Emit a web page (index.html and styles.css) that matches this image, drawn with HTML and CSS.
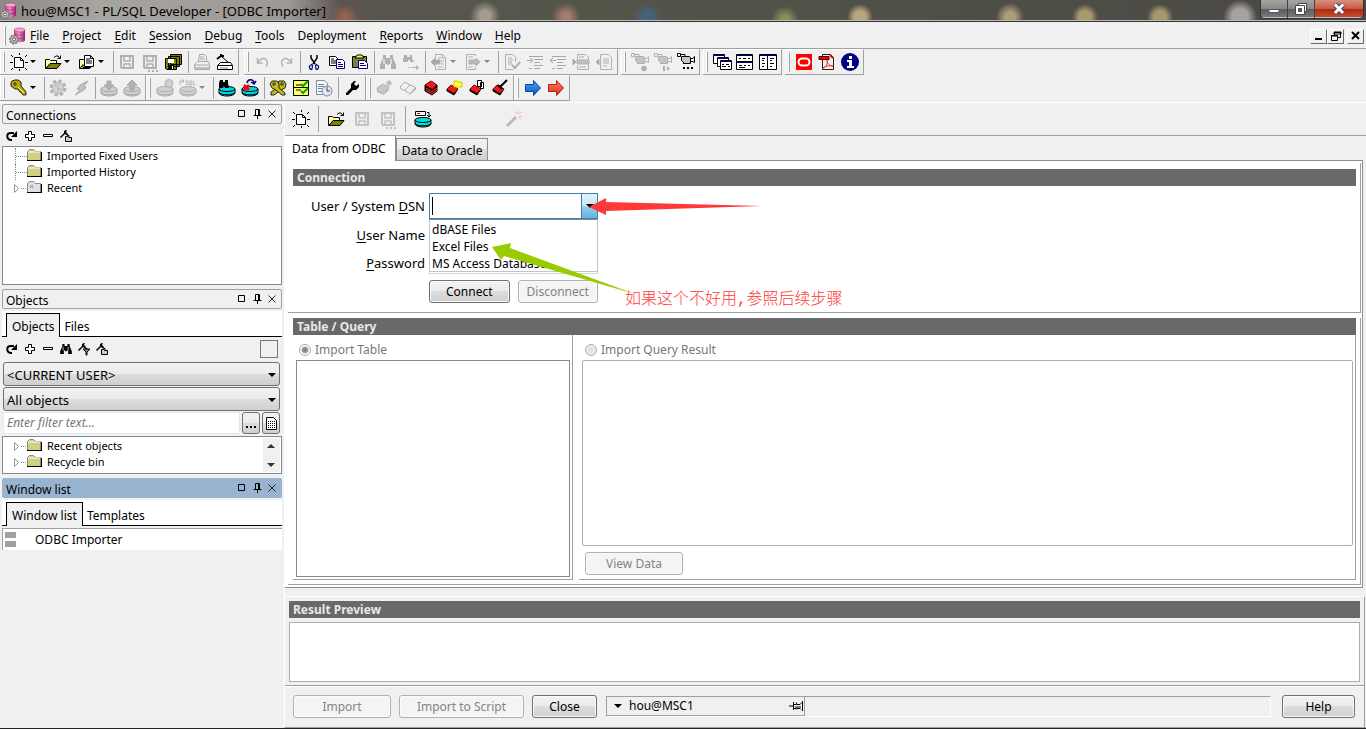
FILE: index.html
```html
<!DOCTYPE html>
<html lang="en">

<head>
    <meta charset="UTF-8">
    <meta name="viewport" content="width=device-width, initial-scale=1.0">
    <title>hou@MSC1 - PL/SQL Developer - [ODBC Importer]</title>
    <link rel="stylesheet" href="styles.css">
</head>

<body>
    <!-- icon shapes, all on a 16x16 grid -->
    <svg class="sprite" aria-hidden="true">
        <defs>
            <linearGradient id="pink"><stop offset="0" stop-color="#c4388c"/><stop offset=".4" stop-color="#f09ccc"/><stop offset="1" stop-color="#9c1c64"/></linearGradient>
            <linearGradient id="blueFill" x2="0" y2="1"><stop offset="0" stop-color="#4aa0f0"/><stop offset="1" stop-color="#0a5cc0"/></linearGradient>
            <linearGradient id="redFill" x2="0" y2="1"><stop offset="0" stop-color="#ff8070"/><stop offset="1" stop-color="#e02818"/></linearGradient>
            <pattern id="dither" width="2" height="2" patternUnits="userSpaceOnUse"><path fill="#ffff60" d="M0 0h2v2H0z"/><path fill="#fff" d="M0 0h1v1H0zM1 1h1v1H1z"/></pattern>

            <g id="app">
                <path d="M4 2v10c0 3 11 3 11 0V2z" fill="url(#pink)"/>
                <ellipse cx="9.500" cy="2" rx="5.500" ry="2" fill="#f4a8d4" stroke="#a83474" stroke-width=".6"/>
                <path d="M4 5.500c1 2 10 2 11 0M4 9c1 2 10 2 11 0" fill="none" stroke="#a02468" stroke-width=".7"/>
                <circle cx="4" cy="11.500" r="4" fill="#ccc" stroke="#777" stroke-dasharray="2 1" stroke-width="2"/>
                <circle cx="4" cy="11.500" r="3.500" fill="#c8c8c8" stroke="#888"/>
                <circle cx="4" cy="11.500" r="1.500" fill="#fff" stroke="#555"/>
            </g>
            <g id="new" fill="none" stroke="#000">
                <path d="M3.500 3.500h6l3 3v7h-9z" fill="#fff"/><path d="M9.500 3.500v3h3"/>
                <path d="M8.500-1v2M8.500 15v2M-1 8.500h3M14 8.500h3M0 1l2 2M16 1l-2 2M0 16l2-2M16 16l-2-2"/>
            </g>
            <g id="open">
                <path d="M.5 14.500v-9h4l1 1h6v3h-6z" fill="url(#dither)" stroke="#000"/>
                <path d="M1 14.500l4-5h11l-4 5z" fill="#808000" stroke="#000"/>
                <path d="M9 3.500l2-1.500h2l2 2.500M15.500 1.500v3h-3" fill="none" stroke="#000"/>
            </g>
            <g id="openPage">
                <path d="M.5 14.500v-9h4l1 1h4v8z" fill="url(#dither)" stroke="#000"/>
                <path d="M5.500 1.500h6l3 3v8h-9z" fill="#fff" stroke="#000"/>
                <path d="M7 5h4M7 7h6M7 9h6M11.500 1.500v3h3" stroke="#000" fill="none"/>
                <path d="M1 14.500l3-4v3h8l-2 1z" fill="#ffff60" stroke="#000"/>
            </g>
            <g id="save" fill="none" stroke="#b0b0b0" stroke-width="2">
                <path d="M2 2h12v12H3l-1-1z"/><path d="M5 2v5h6V2M5 14v-4h6v4" stroke-width="1.500"/>
            </g>
            <g id="saveAs"><use href="#save"/><path fill="#b0b0b0" d="M6 16h2v2H6zM10 16h2v2h-2zM14 16h2v2h-2z"/></g>
            <g id="saveAll" stroke="#000" fill="#808000">
                <path d="M5.500.5h11v10h-11zM3.500 2.500h11v10h-11zM.5 4.500h11v11H2l-1.500-1z"/>
                <path d="M3 5h6v4H3z" fill="#fff" stroke="none"/><path d="M3 11h6v4H3z" fill="#000" stroke="none"/><path d="M7 12h1v3H7z" fill="#fff" stroke="none"/>
            </g>
            <g id="print" fill="none" stroke="#a8a8a8">
                <path d="M4.500 7.500l1-7h5l2 2v5M6 3h4M6 5h5"/><path d="M.5 10.500l3-3h11l1 3v5H1l-.5-1zM1 11h14M3 13.500h9" /><path d="M1 13h14v2H1z" fill="#c0c0c0" stroke="none"/>
            </g>
            <g id="printSetup" fill="none" stroke="#000">
                <path d="M.5 11.500l3-3h10l2 3v4h-15zM1 11.500h14" fill="#fff"/><path d="M3 14h8" stroke="#888"/>
                <path d="M0 5l4-3M4 2V0M4 2h3" stroke-width="2"/><path d="M5 3l6 5"/>
            </g>
            <path id="undo" d="M2.500 4v5h5M3 8.500c2-4 6-5 8-3s2 4 0 7" fill="none" stroke="#b4b4b4" stroke-width="1.500"/>
            <path id="redo" d="M13.500 4v5h-5M13 8.500c-2-4-6-5-8-3s-2 4 0 7" fill="none" stroke="#b4b4b4" stroke-width="1.500"/>
            <g id="cut" fill="none"><path d="M5 1v3l4 6M11 1v3L7 10" stroke="#000" stroke-width="1.500"/><path d="M6.500 10L5 11c-3 1-1 6 1 4l.5-4M9.500 10l1.500 1c3 1 1 6-1 4l-.5-4" stroke="#000080" stroke-width="1.200"/></g>
            <g id="copy" fill="#fff"><path d="M.5 2.500h6l2 2v7h-8z" stroke="#000"/><path d="M2 5h3M2 7h5M2 9h5" stroke="#000"/><path d="M7.500 5.500h6l2 2v7h-8z" stroke="#000080"/><path d="M9 8.500h3M9 10.500h5M9 12.500h5" stroke="#000080"/></g>
            <g id="paste"><path d="M.5 2.500h14v11H.5z" fill="#808040" stroke="#000"/><path d="M3 4l2-3h5l2 3z" fill="#ffff40" stroke="#000"/><path d="M6.500 6.500h6l3 3v5h-9z" fill="#fff" stroke="#000080"/><path d="M8 9.500h4M8 11.500h6" stroke="#000080"/></g>
            <path id="binoc" d="M3 1h3v3h4V1h3v3l3 7v4h-5v-5H9v1H7v-1H5v5H0v-4l3-7z"/>
            <path id="binocDots" d="M4 5v5M11 5v5" stroke="#fff"/>
            <g id="findNext" fill="#b0b0b0"><path d="M1 1h3v2h3V1h2v3l2 4H7V6H5v2H0V5l1-2z"/><path d="M5 13h1v1H5zM7 13h1v1H7zM9 13h4v-2l3 2.500-3 2.500v-2H9z"/></g>
            <g id="back" fill="none" stroke="#b0b0b0"><path d="M4.500 4V.5h7l3 3v12h-10V12M11 1v3h3M7 4h3M10 7h3M10 10h3M7 13h5"/><path d="M0 8l4-4v2h5v4H4v2z" fill="#a8a8a8"/></g>
            <g id="forward" fill="none" stroke="#b0b0b0"><path d="M10.500 2V.5h-9v15h9V13M3 3h5M3 13h5"/><path d="M15 8l-4-4v2H4v4h7v2z" fill="#b8b8b8"/></g>
            <g id="docCheck" fill="none" stroke="#b0b0b0"><path d="M11.500 8V3l-3-2.500h-7v15h8M4 4h4M4 6h5M4 8h4M4 10h4"/><path d="M8 11l3 3 5-6" stroke-width="2"/></g>
            <path id="indent" d="M2 2.500h14M7 5.500h9M7 8.500h6M7 11.500h9M2 14.500h3M7 14.500h6M0 6.500h5M3 4l3 2.500L3 9" fill="none" stroke="#a8a8a8"/>
            <path id="outdent" d="M2 2.500h14M7 5.500h9M7 8.500h6M7 11.500h9M2 14.500h3M7 14.500h6M1 6.500h5M3 4L0 6.500 3 9" fill="none" stroke="#a8a8a8"/>
            <g id="comment" fill="none" stroke="#b0b0b0"><path d="M4.500 6V.5h8l3 3v12h-11v-4M6 3h5M6 13h7"/><path d="M4 6h12v4H4z" fill="#c0c0c0"/><path d="M0 5l3 3-3 3z" fill="#a0a0a0"/></g>
            <g id="uncomment" fill="none" stroke="#b0b0b0"><path d="M4.500.5h8l3 3v12h-11zM7 5h6M7 7h6M7 9h6M7 12h4"/><path d="M3 5L0 8l3 3z" fill="#a0a0a0"/></g>
            <g id="camera" stroke="currentColor" fill="none"><path d="M3.500 2.500h8l1 1v6h-6l-3-3z" fill="#c4c4c4"/><path d="M-.5-.5h3v3h-3zM3 .5h4v2M13 4.500h2l1.500-2v6l-1.500-1h-2M5 9.500h6"/></g>
            <g id="record" color="#b0b0b0"><use href="#camera"/><circle cx="12" cy="14.500" r="2.800" fill="#b0b0b0"/></g>
            <g id="playback" color="#b0b0b0"><use href="#camera"/><path d="M8 12h2v5H8zM12 12l3 2.500-3 2.500z" fill="#b0b0b0"/></g>
            <g id="macro" color="#000"><use href="#camera"/><path d="M5 13h2v2H5zM9 13h2v2H9zM13 13h2v2h-2z"/></g>
            <g id="cascade" fill="#fff" stroke="#000"><path d="M-.5.500h11v9h-11z"/><path d="M3.500 3.500h11v9h-11z"/><path d="M6.500 6.500h11v9h-11z"/><path d="M-1 1.500h12M3 4.500h12M6 7.500h12" stroke="#000080"/><path d="M8 10.500h2M12 10.500h3M8 12.500h4M14 12.500h2"/></g>
            <g id="tileH" fill="#fff" stroke="#000"><path d="M-.5.500h16v7h-16zM-.5 7.500h16v8h-16z"/><path d="M0 1.500h15M0 8.500h15" stroke="#000080"/><path d="M2 4.500h2M6 4.500h3M11 4.500h2M2 11.500h3M7 11.500h2M11 11.500h2M2 13.500h6"/></g>
            <g id="tileV" fill="#fff" stroke="#000"><path d="M-.5.500h8v15h-8zM7.500.5h9v15h-9z"/><path d="M0 1.500h16" stroke="#000080"/><path d="M2 4.500h3M2 6.500h2M2 9.500h3M2 12.500h2M10 4.500h4M10 6.500h2M10 9.500h4M10 12.500h2"/></g>
            <g id="oracle"><path d="M0 0h16v16H0z" fill="#f00"/><rect x="2.500" y="4.500" width="11" height="7" rx="3.500" fill="none" stroke="#fff" stroke-width="2"/></g>
            <g id="pdf"><path d="M3.500.5h8l3 3v12h-11z" fill="#eee" stroke="#222"/><path d="M0 2.500h10v3H0z" fill="#f00" stroke="#500"/><path d="M11 1l3 3" stroke="#e00" stroke-width="2"/><path d="M4 14c3-1 5-4 4-8 0 4 3 6 6 6-4-1-7 0-10 2" fill="none" stroke="#e33"/></g>
            <g id="info"><circle cx="8" cy="8" r="9" fill="#000080"/><path d="M7 2h3v3H7zM5 6h5v6h2v2H5v-2h2V8H5z" fill="#fff"/></g>

            <g id="key"><path d="M1 1l3-1h3l3 2v4l5 6v3h-3l-2-3H9L7 9H4L0 6V3z" fill="#b8b000" stroke="#222"/><path d="M3 3h2v2H3z" fill="#fff" stroke="#222"/><path d="M7 7l6 6" stroke="#ff6"/></g>
            <g id="gear" fill="none" stroke="#b4b4b4"><circle cx="8" cy="8" r="7" stroke-width="3" stroke-dasharray="3.500 2"/><circle cx="8" cy="8" r="5.500" fill="#d4d4d4"/><path d="M8 4v8M5 6h3M8 9h4"/></g>
            <path id="bolt" d="M15 1L7 5 4 9l3 1-5 5 9-5 2-3-2-1z" fill="#c0c0c0" stroke="#aaa"/>
            <g id="disk"><path d="M0 9v4c1 4 15 4 16 0V9z"/><ellipse cx="8" cy="9" rx="8" ry="2.500"/><path d="M0 12.500c2 3 14 3 16 0" fill="none"/></g>
            <g id="commit" fill="#d0d0d0" stroke="#a8a8a8"><use href="#disk"/><path d="M6 1h4v4h3l-5 5-5-5h3z" fill="#b0b0b0"/></g>
            <g id="rollback" fill="#d0d0d0" stroke="#a8a8a8"><use href="#disk"/><path d="M6 10h4V5h3L8 0 3 5h3z" fill="#b0b0b0"/></g>
            <g id="diskBall" fill="#d0d0d0" stroke="#b0b0b0"><use href="#disk"/><circle cx="12" cy="3.500" r="4"/></g>
            <g id="diskSql" fill="#d0d0d0" stroke="#b0b0b0"><use href="#disk"/><path d="M0 5V1h4M2-1l2 2-2 2" fill="none"/><text x="5" y="5" class="sql-mark">SQL</text></g>
            <g id="dbFind" fill="#00d8e0" stroke="#000"><use href="#disk"/><path d="M1 0h3v2h2V0h3v3l1 5H6V6H4v2H0V3z" fill="#000" stroke="none"/></g>
            <g id="dbStop" fill="#00d8e0" stroke="#000"><use href="#disk"/><path d="M2 5l5 5M7 5l-5 5" stroke="#f00" stroke-width="2.500"/><path d="M5 3c1-5 7-4 7 1M9 2l3 2 2-3" fill="none" stroke="#000080" stroke-width="1.500"/></g>
            <g id="keys" stroke="#222" fill="#c4bc10"><path d="M9 1h5l2 3-1 4-4 2-7 5H1v-3l6-4z"/><path d="M2 1h5l2 3 0 4 6 5v2h-3L6 10 2 8 0 4z"/><path d="M3 3h2v2H3zM11 3h2v2h-2z" fill="#fff"/></g>
            <g id="check"><path d="M.5.500h15v15H.5z" fill="#ffff60" stroke="#000"/><path d="M3 5h5M3 10h5M1 7.500h14" stroke="#000"/><path d="M8 4l2 2 5-5M8 11l2 2 5-5" fill="none" stroke="#0a0" stroke-width="2"/></g>
            <g id="report" fill="#f8f8f8" stroke="#889"><path d="M.5.500h8l3 3v11H.5z"/><path d="M2 4.500h6M2 6.500h7M2 8.500h4M2 11.500h4" stroke="#68a"/><circle cx="11" cy="11" r="5" fill="#dfe8f4"/><path d="M11 7v4h3" stroke="#345" fill="none"/></g>
            <path id="wrench" d="M2 13l5-5V4l3-3h2l-2 3 2 2 3-2v3l-3 3H9l-5 5H2z"/>
            <g id="bookNew" fill="#c8c8c8" stroke="#b0b0b0"><path d="M0 8l6-4 6 3-5 7-6-2z"/><path d="M0 11l7 3 5-5M12 0v6M9 3h6M10 1l4 4M14 1l-4 4" fill="none"/></g>
            <path id="bookOpen" d="M0 7l5-5 5 3 5 2 1 2-6 5-4-3-5-2zM5 10l5-5M10 14l5-6" fill="none" stroke="#aaa"/>
            <g id="book"><path d="M2 5l6-4 6 4v6l-5 4-7-4z" fill="#200" stroke="#000"/><path d="M2 5l6-4 6 4-5 4z" fill="#f01818"/><path d="M3 8l6 4 5-4M3 10l6 4 5-4" fill="none" stroke="#f33"/></g>
            <g id="bookRed"><path d="M1 9l4-4 7 4-4 6-7-4z" fill="#300" stroke="#000"/><path d="M1 9l4-4 7 4-4 4z" fill="#f01818"/></g>
            <g id="bookFolder"><use href="#bookRed"/><path d="M8 1h3l1 1h4v5H8z" fill="#ff3" stroke="#cc0"/></g>
            <g id="bookCopy"><use href="#bookRed"/><path d="M8.500.5h4v6h-4zM11.500 2.500h3v6h-3z" fill="#fff" stroke="#000"/></g>
            <g id="bookPen"><use href="#bookRed"/><path d="M15 0L8 7M6 5l4 4" stroke="#000" stroke-width="2"/></g>
            <path id="arrowBlue" d="M.5 4.500h8V.5l7 7.500-7 7.500v-4h-8z" fill="url(#blueFill)" stroke="#0848a0"/>
            <path id="arrowRed" d="M.5 4.500h8V.5l7 7.500-7 7.500v-4h-8z" fill="url(#redFill)" stroke="#b02010"/>

            <path id="down" d="M0 6h6L3 9z"/>
            <path id="downBig" d="M0 6h8l-4 4z"/>
            <g id="dbImport" fill="#00e0e0" stroke="#000"><use href="#disk"/><path d="M.5.500h10v4H.5z" fill="#fff"/><path d="M2 2.500h3" stroke="#c00"/><path d="M12 1.500h2v4M12 4l2 2 2-2" fill="none"/></g>
            <g id="wand" fill="none"><path d="M1 15L10 6" stroke="#b8b8b8" stroke-width="3"/><path d="M12 0v3M9 1l2 2M15 1l-2 2M16 5h-3M15 8l-2-2" stroke="#f0b4b4"/></g>

            <path id="boxy" d="M4.500 4.500h6v6h-6z" fill="none" stroke="#000"/>
            <path id="pin" d="M6.500 3.500h4v6h-4zM9.500 4v5M4.500 9.500h8M8.500 10v3" fill="none" stroke="#000"/>
            <path id="cross" d="M4.500 4.500l7 7M11.500 4.500l-7 7" fill="none" stroke="#222"/>
            <g id="refresh"><path d="M8 12H7C2 11 2 5 7 5h3" fill="none" stroke="#000" stroke-width="2"/><path d="M13 3v6H7z"/></g>
            <path id="plus" d="M6.500 3.500h3v3h3v3h-3v3h-3v-3h-3v-3h3z" fill="#fff" stroke="#000"/>
            <path id="minus" d="M3.500 6.500h9v2h-9z" fill="#fff" stroke="#000"/>
            <g id="toolFolder"><path d="M2 9l4-4V3l2-1h1L8 4l2 2H7l-4 4zM8 5l4 3-1 1-4-3z"/><path d="M7.500 8.500h2l1 1h3v4h-6z" fill="#ccc" stroke="#000"/></g>
            <g id="toolFilter"><path d="M2 9l4-4V3l2-1h1L8 4l2 2H7l-4 4zM8 5l4 3-1 1-4-3z"/><path d="M7 8h7l-3 3v3h-1v-3z" fill="#888" stroke="#000"/></g>

            <g id="folder"><path d="M.5 12.500v-9l2-2h4l2 2h5v9z" fill="#d0d080" stroke="#888"/><path d="M1 4h12" stroke="#fff"/><path d="M0 12.500h15M14.500 4v9" stroke="#000"/></g>
            <g id="folderGray"><path d="M.5 12.500v-9l2-2h4l2 2h5v9z" fill="#e0e0e0" stroke="#888"/><path d="M3 5l3 3M6 5L3 8" stroke="#888"/><path d="M0 12.500h15M14.500 4v9" stroke="#000"/></g>
            <path id="twist" d="M.5 4.500l4 4-4 4z" fill="#fff" stroke="#999"/>
        </defs>
    </svg>

    <header class="titlebar">
        <svg class="icon"><use href="#app"/></svg>
        <span class="caption">hou@MSC1 - PL/SQL Developer - [ODBC Importer]</span>
        <div class="window-buttons">
            <button aria-label="Minimize"><svg class="icon"><path d="M3 8.500h10v3H3z" fill="#fff" stroke="#556"/></svg></button>
            <button aria-label="Restore"><svg class="icon"><path d="M5.500 2.500h8v8h-8z" fill="#fff" stroke="#445"/><path d="M2.500 4.500h9v9h-9z" fill="#fff" stroke="#445"/><path d="M5.500 7.500h3v3h-3z" fill="#666" stroke="#445"/></svg></button>
            <button class="close" aria-label="Close window"><svg class="icon"><path d="M4 3.500l8 8.500M12 3.500L4 12" stroke="#446" stroke-width="5"/><path d="M4 3.500l8 8.500M12 3.500L4 12" stroke="#fff" stroke-width="3"/></svg></button>
        </div>
    </header>

    <nav class="menubar">
        <i class="grip"></i>
        <svg class="icon"><use href="#app"/></svg>
        <a href="#"><u>F</u>ile</a>
        <a href="#"><u>P</u>roject</a>
        <a href="#"><u>E</u>dit</a>
        <a href="#"><u>S</u>ession</a>
        <a href="#"><u>D</u>ebug</a>
        <a href="#"><u>T</u>ools</a>
        <a href="#">Deployment</a>
        <a href="#"><u>R</u>eports</a>
        <a href="#"><u>W</u>indow</a>
        <a href="#"><u>H</u>elp</a>
        <div class="mdi-buttons">
            <button aria-label="Minimize child"><svg class="icon"><path d="M4 10h7v2H4z"/></svg></button>
            <button aria-label="Restore child"><svg class="icon"><path d="M6.500 4.500h6v5h-6zM6 4h7v2H6z" fill="#f0f0f0" stroke="#000"/><path d="M3.500 7.500h6v5h-6zM3 8h7" fill="#f0f0f0" stroke="#000"/></svg></button>
            <button aria-label="Close child"><svg class="icon"><path d="M4 4l7 7M11 4l-7 7" stroke="#000" stroke-width="2"/></svg></button>
        </div>
    </nav>

    <div class="toolbar-row">
        <div class="toolbar file-bar">
            <i class="grip"></i>
            <button class="menu" aria-label="New"><svg class="icon"><use href="#new"/></svg><svg class="arrow"><use href="#down"/></svg></button>
            <button class="menu" aria-label="Open"><svg class="icon"><use href="#open"/></svg><svg class="arrow"><use href="#down"/></svg></button>
            <button class="menu" aria-label="Reopen"><svg class="icon"><use href="#openPage"/></svg><svg class="arrow"><use href="#down"/></svg></button>
            <i class="sep"></i>
            <button disabled aria-label="Save"><svg class="icon"><use href="#save"/></svg></button>
            <button disabled aria-label="Save as"><svg class="icon"><use href="#saveAs"/></svg></button>
            <button aria-label="Save all"><svg class="icon"><use href="#saveAll"/></svg></button>
            <i class="sep"></i>
            <button disabled aria-label="Print"><svg class="icon"><use href="#print"/></svg></button>
            <button aria-label="Print setup"><svg class="icon"><use href="#printSetup"/></svg></button>
        </div>
        <div class="toolbar">
            <i class="grip"></i>
            <button disabled aria-label="Undo"><svg class="icon"><use href="#undo"/></svg></button>
            <button disabled aria-label="Redo"><svg class="icon"><use href="#redo"/></svg></button>
            <i class="sep"></i>
            <button aria-label="Cut"><svg class="icon"><use href="#cut"/></svg></button>
            <button aria-label="Copy"><svg class="icon"><use href="#copy"/></svg></button>
            <button aria-label="Paste"><svg class="icon"><use href="#paste"/></svg></button>
            <i class="sep"></i>
            <button disabled aria-label="Find"><svg class="icon"><use href="#binoc" fill="#b0b0b0"/><use href="#binocDots"/></svg></button>
            <button disabled aria-label="Find next"><svg class="icon"><use href="#findNext"/></svg></button>
            <i class="sep"></i>
            <button class="menu" disabled aria-label="Back"><svg class="icon"><use href="#back"/></svg><svg class="arrow"><use href="#down"/></svg></button>
            <button class="menu" disabled aria-label="Forward"><svg class="icon"><use href="#forward"/></svg><svg class="arrow"><use href="#down"/></svg></button>
            <i class="sep"></i>
            <button disabled aria-label="Beautify"><svg class="icon"><use href="#docCheck"/></svg></button>
            <button disabled aria-label="Indent"><svg class="icon"><use href="#indent"/></svg></button>
            <button disabled aria-label="Unindent"><svg class="icon"><use href="#outdent"/></svg></button>
            <button disabled aria-label="Comment"><svg class="icon"><use href="#comment"/></svg></button>
            <button disabled aria-label="Uncomment"><svg class="icon"><use href="#uncomment"/></svg></button>
        </div>
        <div class="toolbar">
            <i class="grip"></i>
            <button disabled aria-label="Record macro"><svg class="icon"><use href="#record"/></svg></button>
            <button disabled aria-label="Play macro"><svg class="icon"><use href="#playback"/></svg></button>
            <button aria-label="Macro library"><svg class="icon"><use href="#macro"/></svg></button>
        </div>
        <div class="toolbar">
            <i class="grip"></i>
            <button aria-label="Cascade"><svg class="icon"><use href="#cascade"/></svg></button>
            <button aria-label="Tile horizontally"><svg class="icon"><use href="#tileH"/></svg></button>
            <button aria-label="Tile vertically"><svg class="icon"><use href="#tileV"/></svg></button>
        </div>
        <div class="toolbar">
            <i class="grip"></i>
            <button aria-label="Oracle"><svg class="icon"><use href="#oracle"/></svg></button>
            <button aria-label="Manual"><svg class="icon"><use href="#pdf"/></svg></button>
            <button aria-label="About"><svg class="icon"><use href="#info"/></svg></button>
        </div>
    </div>

    <div class="toolbar-row tight">
        <div class="toolbar">
            <i class="grip"></i>
            <button class="menu" aria-label="Log on"><svg class="icon"><use href="#key"/></svg><svg class="arrow"><use href="#down"/></svg></button>
            <i class="sep"></i>
            <button disabled aria-label="Execute"><svg class="icon"><use href="#gear"/></svg></button>
            <button disabled aria-label="Break"><svg class="icon"><use href="#bolt"/></svg></button>
            <i class="sep"></i>
            <button disabled aria-label="Commit"><svg class="icon"><use href="#commit"/></svg></button>
            <button disabled aria-label="Rollback"><svg class="icon"><use href="#rollback"/></svg></button>
        </div>
        <div class="toolbar">
            <i class="grip"></i>
            <button disabled aria-label="Explain plan"><svg class="icon"><use href="#diskBall"/></svg></button>
            <button class="menu" disabled aria-label="Previous SQL"><svg class="icon"><use href="#diskSql"/></svg><svg class="arrow"><use href="#down"/></svg></button>
            <i class="sep"></i>
            <button aria-label="Find database objects"><svg class="icon"><use href="#dbFind"/></svg></button>
            <button aria-label="Recompile invalid objects"><svg class="icon"><use href="#dbStop"/></svg></button>
            <i class="sep"></i>
            <button aria-label="Sessions"><svg class="icon"><use href="#keys"/></svg></button>
            <button aria-label="Test manager"><svg class="icon"><use href="#check"/></svg></button>
            <button aria-label="Event monitor"><svg class="icon"><use href="#report"/></svg></button>
            <i class="sep"></i>
            <button aria-label="Preferences"><svg class="icon"><use href="#wrench"/></svg></button>
        </div>
        <div class="toolbar">
            <i class="grip"></i>
            <button disabled aria-label="New project"><svg class="icon"><use href="#bookNew"/></svg></button>
            <button disabled aria-label="Open project"><svg class="icon"><use href="#bookOpen"/></svg></button>
            <button aria-label="Project items"><svg class="icon"><use href="#book"/></svg></button>
            <button aria-label="Project files"><svg class="icon"><use href="#bookFolder"/></svg></button>
            <button aria-label="Copy project"><svg class="icon"><use href="#bookCopy"/></svg></button>
            <button aria-label="Project options"><svg class="icon"><use href="#bookPen"/></svg></button>
        </div>
        <div class="toolbar">
            <i class="grip"></i>
            <button aria-label="Next"><svg class="icon"><use href="#arrowBlue"/></svg></button>
            <button aria-label="Jump"><svg class="icon"><use href="#arrowRed"/></svg></button>
        </div>
    </div>

    <main class="workspace">
        <aside class="sidebar">
            <section class="dock">
                <h2 class="dock-title"><span>Connections</span><svg class="icon"><use href="#boxy"/></svg><svg class="icon"><use href="#pin"/></svg><svg class="icon"><use href="#cross"/></svg></h2>
                <div class="dock-tools">
                    <button aria-label="Refresh"><svg class="icon"><use href="#refresh"/></svg></button>
                    <button aria-label="Expand"><svg class="icon"><use href="#plus"/></svg></button>
                    <button aria-label="Collapse"><svg class="icon"><use href="#minus"/></svg></button>
                    <button aria-label="Configure"><svg class="icon"><use href="#toolFolder"/></svg></button>
                </div>
                <ul class="tree connections">
                    <li><i class="branch"></i><svg class="icon"><use href="#folder"/></svg>Imported Fixed Users</li>
                    <li><i class="branch"></i><svg class="icon"><use href="#folder"/></svg>Imported History</li>
                    <li><svg class="twist"><use href="#twist"/></svg><i class="stub"></i><svg class="icon"><use href="#folderGray"/></svg>Recent</li>
                </ul>
            </section>

            <section class="dock">
                <h2 class="dock-title"><span>Objects</span><svg class="icon"><use href="#boxy"/></svg><svg class="icon"><use href="#pin"/></svg><svg class="icon"><use href="#cross"/></svg></h2>
                <div class="dock-tabs">
                    <button class="active">Objects</button>
                    <button>Files</button>
                </div>
                <div class="dock-tools">
                    <button aria-label="Refresh objects"><svg class="icon"><use href="#refresh"/></svg></button>
                    <button aria-label="Expand objects"><svg class="icon"><use href="#plus"/></svg></button>
                    <button aria-label="Collapse objects"><svg class="icon"><use href="#minus"/></svg></button>
                    <button aria-label="Find objects"><svg class="icon" viewBox="-3 -3 22 22"><use href="#binoc"/><use href="#binocDots"/></svg></button>
                    <button aria-label="Filter"><svg class="icon"><use href="#toolFilter"/></svg></button>
                    <button aria-label="Configure folders"><svg class="icon"><use href="#toolFolder"/></svg></button>
                    <i class="swatch"></i>
                </div>
                <div class="filters">
                    <div class="picker"><select aria-label="User"><option>&lt;CURRENT USER&gt;</option></select></div>
                    <div class="picker"><select aria-label="Object filter"><option>All objects</option></select></div>
                    <div class="filter-line">
                        <input type="text" placeholder="Enter filter text..." aria-label="Filter text">
                        <button aria-label="More"><svg class="icon"><path d="M3 11h2v2H3zM7 11h2v2H7zM11 11h2v2h-2z"/></svg></button>
                        <button aria-label="Object list"><svg class="icon"><path d="M3.500 2.500h7l3 3v9h-10z" fill="#fff" stroke="#000"/><path d="M5 6.500h7M5 8.500h7M5 10.500h7M5 12.500h7" stroke="#000" stroke-dasharray="1 1"/></svg></button>
                    </div>
                </div>
                <div class="tree objects">
                    <ul>
                        <li><svg class="twist"><use href="#twist"/></svg><i class="stub"></i><svg class="icon"><use href="#folder"/></svg>Recent objects</li>
                        <li><svg class="twist"><use href="#twist"/></svg><i class="stub"></i><svg class="icon"><use href="#folder"/></svg>Recycle bin</li>
                    </ul>
                    <div class="scroller">
                        <svg class="icon"><path d="M4 10l4-4 4 4z" fill="#333"/></svg>
                        <svg class="icon"><path d="M4 7l4 4 4-4z" fill="#333"/></svg>
                    </div>
                </div>
            </section>

            <section class="dock">
                <h2 class="dock-title current"><span>Window list</span><svg class="icon"><use href="#boxy"/></svg><svg class="icon"><use href="#pin"/></svg><svg class="icon"><use href="#cross"/></svg></h2>
                <div class="dock-tabs">
                    <button class="active">Window list</button>
                    <button>Templates</button>
                </div>
                <div class="window-item"><svg class="icon"><path d="M2 0h11v6H2zM2 9h11v6H2z" fill="#a0a0a0"/></svg>ODBC Importer</div>
            </section>
        </aside>

        <section class="importer">
            <div class="importer-tools">
                <button aria-label="New import"><svg class="icon"><use href="#new"/></svg></button>
                <i class="sep"></i>
                <button aria-label="Open definition"><svg class="icon"><use href="#open"/></svg></button>
                <button disabled aria-label="Save definition"><svg class="icon faded"><use href="#save"/></svg></button>
                <button disabled aria-label="Save definition as"><svg class="icon faded"><use href="#saveAs"/></svg></button>
                <i class="sep"></i>
                <button aria-label="Import"><svg class="icon"><use href="#dbImport"/></svg></button>
                <button class="wizard" disabled aria-label="Wizard"><svg class="icon"><use href="#wand"/></svg></button>
            </div>

            <div class="page-tabs">
                <button class="active">Data from ODBC</button>
                <button>Data to Oracle</button>
            </div>

            <div class="page">
                <div class="connection">
                    <h3 class="band">Connection</h3>
                    <form class="login">
                        <label for="dsn">User / System <u>D</u>SN</label>
                        <div class="combo">
                            <input type="text" id="dsn">
                            <button type="button" aria-label="Show list"><svg class="arrow"><use href="#downBig"/></svg></button>
                            <ul class="options">
                                <li>dBASE Files</li>
                                <li>Excel Files</li>
                                <li>MS Access Database</li>
                            </ul>
                        </div>
                        <label for="user"><u>U</u>ser Name</label>
                        <input type="text" id="user">
                        <label for="password"><u>P</u>assword</label>
                        <input type="password" id="password">
                        <div class="login-buttons">
                            <button type="button" class="btn">Connect</button>
                            <button type="button" class="btn" disabled>Disconnect</button>
                        </div>
                    </form>
                    <svg class="pointers" aria-hidden="true">
                        <path d="M301 38l17-9v4l156 4-156 5v4z" fill="#ff3838"/>
                        <path d="M204 78l19-4-1 5 125 46-131-38-3 4z" fill="#99cc00"/>
                    </svg>
                    <p class="note" lang="zh">如果这个不好用,参照后续步骤</p>
                </div>

                <div class="query">
                    <h3 class="band">Table / Query</h3>
                    <div class="panes">
                        <div class="pane table-pane">
                            <label><input type="radio" name="source" checked disabled>Import Table</label>
                            <div class="listbox"></div>
                        </div>
                        <div class="pane query-pane">
                            <label><input type="radio" name="source" disabled>Import Query Result</label>
                            <textarea aria-label="Query" disabled></textarea>
                            <button class="btn" disabled>View Data</button>
                        </div>
                    </div>
                </div>
            </div>

            <div class="preview">
                <h3 class="band">Result Preview</h3>
                <div class="result"></div>
            </div>

            <footer class="actions">
                <button class="btn" disabled>Import</button>
                <button class="btn wide" disabled>Import to Script</button>
                <button class="btn small">Close</button>
                <div class="status">
                    <button class="session"><svg class="arrow"><use href="#downBig"/></svg><span>hou@MSC1</span><svg class="icon"><path d="M1 8h4M5.500 4v8M6 6.500h2.500v-2M6 10.500h2.500v1M9 6.500h3l2-2M9 10.500h3l1 1M14.500 3v10M7 9h6" fill="none" stroke="#000"/></svg></button>
                </div>
                <button class="btn medium">Help</button>
            </footer>
        </section>
    </main>
</body>

</html>
```
FILE: styles.css
```css
* {
    box-sizing: border-box;
}

body {
    margin: 0;
    min-height: 100vh;
    display: flex;
    flex-direction: column;
    background-color: #f0f0f0;
    border-bottom: 1px solid #222;
    font-family: "Noto Sans", "Noto Sans CJK SC", sans-serif;
    font-size: 12px;
    line-height: 16px;
    color: #000;
}

button,
input,
select,
textarea {
    font: inherit;
    color: inherit;
    margin: 0;
    padding: 0;
}

button {
    border: none;
    background: none;
}

ul {
    list-style: none;
    margin: 0;
    padding: 0;
}

u {
    text-underline-offset: 2px;
}

.sprite {
    position: absolute;
    width: 0;
    height: 0;
}

.icon {
    width: 16px;
    height: 16px;
    flex: none;
    display: block;
    overflow: visible;
}

.faded {
    opacity: 0.7;
}

.arrow {
    width: 11px;
    height: 16px;
    flex: none;
    display: block;
}

.sql-mark {
    font: 6px "DejaVu Sans Mono", monospace;
    fill: #999;
    stroke: none;
}

/* title bar */
.titlebar {
    height: 22px;
    display: flex;
    align-items: center;
    gap: 4px;
    padding: 0 2px 0 1px;
    border-bottom: 1px solid #333;
    box-shadow: inset 0 -1px #bbb;
    background:
        radial-gradient(circle at 345px 18px, #94604f 4px, transparent 14px),
        radial-gradient(circle at 485px 16px, #a39c8e 5px, transparent 15px),
        radial-gradient(circle at 566px 17px, #a67c70 4px, transparent 14px),
        radial-gradient(circle at 647px 18px, #41647c 5px, transparent 14px),
        radial-gradient(circle at 785px 20px, #8c8c58 4px, transparent 14px),
        radial-gradient(circle at 860px 17px, #b8a67c 6px, transparent 13px),
        radial-gradient(circle at 1010px 17px, #ac9e78 5px, transparent 14px),
        radial-gradient(circle at 1085px 17px, #a89a6e 6px, transparent 13px),
        radial-gradient(circle at 1160px 17px, #a89a6e 6px, transparent 13px),
        radial-gradient(circle at 1240px 17px, #a8a29e 8px, transparent 17px),
        linear-gradient(90deg, #8c8888, #a8a4a0 100px, #9c9894 290px, #5c5450 340px, #54564a 560px, #4a4844);
}

.caption {
    flex: 1;
    font-size: 13px;
}

.window-buttons {
    display: flex;
    align-self: flex-start;
    height: 19px;
    border: 1px solid #333;
    border-top: none;
    border-radius: 0 0 5px 5px;
    overflow: hidden;
}

.window-buttons button {
    width: 27px;
    display: flex;
    align-items: center;
    justify-content: center;
    background: linear-gradient(#a4a4a0, #888884 50%, #5c5c5c 50%, #7c7c7c);
    box-shadow: inset 0 -1px #c0c0c0;
    border-right: 1px solid #444;
}

.window-buttons .close {
    width: 48px;
    border: none;
    background: linear-gradient(#d89080, #c85840 50%, #b02810 50%, #c85030);
}

/* menu */
.menubar {
    height: 27px;
    display: flex;
    align-items: center;
    gap: 13px;
    padding: 2px 2px 0 4px;
    border-bottom: 1px solid #a0a0a0;
}

.menubar .grip {
    margin-right: -9px;
}

.menubar .icon {
    margin-right: -9px;
}

.menubar a {
    color: #000;
    text-decoration: none;
}

.mdi-buttons {
    display: flex;
    margin-left: auto;
}

.mdi-buttons button {
    width: 17px;
    height: 15px;
    display: flex;
    align-items: center;
    border: 1px solid;
    border-color: #fff #696969 #696969 #fff;
}

.mdi-buttons .icon {
    margin: 0;
}

.mdi-buttons button:last-child {
    margin-left: 3px;
}

.grip {
    width: 2px;
    height: 20px;
    flex: none;
    border-left: 1px solid #fff;
    border-right: 1px solid #a0a0a0;
    margin-right: 3px;
}

/* toolbars */
.toolbar-row {
    display: flex;
    gap: 3px;
}

.toolbar-row.tight {
    gap: 0;
}

.toolbar {
    height: 26px;
    display: flex;
    align-items: center;
    padding: 0 1px 0 3px;
    border-top: 1px solid #fff;
    border-right: 1px solid #a0a0a0;
    border-bottom: 1px solid #a0a0a0;
    box-shadow: inset 1px 0 #fff;
}

.toolbar button {
    width: 23px;
    height: 22px;
    display: flex;
    align-items: center;
    padding-left: 3px;
}

.toolbar .menu {
    width: 34px;
    gap: 3px;
}

.toolbar button:disabled .arrow {
    fill: #888;
}

.sep {
    width: 1px;
    align-self: stretch;
    margin: 1px 2px;
    background-color: #a0a0a0;
}

.file-bar {
    margin-right: 2px;
}

.file-bar .sep {
    margin-left: 3px;
}

/* docked panels */
.workspace {
    flex: 1;
    display: flex;
    margin-top: 1px;
    border-top: 1px solid #fff;
}

.sidebar {
    width: 284px;
    flex: none;
    padding: 1px 2px 0;
}

.dock {
    margin-bottom: 4px;
}

.dock-title {
    height: 20px;
    display: flex;
    align-items: center;
    margin: 0;
    padding: 3px 2px 0 3px;
    border: 1px solid #a0a0a0;
    border-radius: 2px;
    font-size: 12px;
    font-weight: normal;
}

.dock-title span {
    flex: 1;
}

.dock-title .icon {
    width: 15px;
    margin-bottom: 4px;
}

.dock-title.current {
    background-color: #99b4d1;
    border-color: #99b4d1;
}

.dock-tools {
    height: 22px;
    display: flex;
    align-items: center;
    gap: 2px;
    padding: 1px 0 0 2px;
}

.dock-tabs + .dock-tools {
    height: 24px;
    padding-top: 0;
}

.swatch {
    width: 18px;
    height: 18px;
    margin: 0 4px 0 auto;
    border: 1px solid #777;
}

.dock-tabs {
    height: 26px;
    display: flex;
    align-items: flex-end;
    margin-top: 2px;
    padding-left: 4px;
    background: linear-gradient(#000, #000) bottom / 100% 1px no-repeat #fff;
}

.dock-tabs button {
    height: 24px;
    padding: 4px 4px 0;
}

.dock-tabs .active {
    padding: 3px 5px 0;
    border: 1px solid #000;
    border-bottom: none;
    background-color: #f0f0f0;
}

.tree {
    border: 1px solid #828790;
    background-color: #fff;
    font-size: 11px;
}

.tree li {
    height: 16px;
    display: flex;
    align-items: center;
    padding-left: 11px;
}

.tree .icon {
    margin-right: 4px;
}

.tree.connections {
    height: 139px;
    padding-top: 1px;
}

.tree.objects {
    height: 38px;
    display: flex;
    padding: 1px 1px 1px 0;
}

.tree.objects ul {
    flex: 1;
}

.twist {
    width: 6px;
    height: 16px;
}

.stub {
    width: 5px;
    margin: 0 1px;
    border-top: 1px dotted #888;
}

.branch {
    width: 12px;
    height: 16px;
    margin-left: 1px;
    border-left: 1px dotted #888;
    background: repeating-linear-gradient(90deg, #888 0 1px, #fff 1px 2px) 0 8px / 100% 1px no-repeat;
}

.scroller {
    width: 17px;
    display: flex;
    flex-direction: column;
    justify-content: space-between;
    background-color: #f0f0f0;
}

.filters {
    display: flex;
    flex-direction: column;
    gap: 1px;
    padding: 1px 2px 2px 1px;
}

.picker {
    position: relative;
}

.picker::after {
    content: "";
    position: absolute;
    right: 4px;
    top: 11px;
    border: 4px solid transparent;
    border-top-color: #000;
    border-bottom: none;
}

.picker select {
    width: 100%;
    height: 24px;
    display: block;
    appearance: none;
    padding: 1px 0 0 3px;
    border: 1px solid #707070;
    border-radius: 3px;
    background: linear-gradient(#f2f2f2, #ebebeb 50%, #ddd 50%, #cfcfcf);
    font-size: 13px;
}

.filter-line {
    display: flex;
    gap: 2px;
    height: 22px;
}

.filter-line input {
    flex: 1;
    min-width: 0;
    padding-left: 3px;
    border: 1px solid #e3e9ef;
    font-style: italic;
}

.filter-line input::placeholder {
    color: #777;
}

.filter-line button {
    width: 18px;
    border: 1px solid #707070;
    border-radius: 3px;
    background: linear-gradient(#f2f2f2, #ebebeb 50%, #ddd 50%, #cfcfcf);
}

.window-item {
    height: 22px;
    display: flex;
    align-items: center;
    gap: 16px;
    margin-top: 2px;
    border-top: 1px solid #a0a0a0;
    border-left: 1px solid #a0a0a0;
    background-color: #fff;
}

/* importer window */
.importer {
    flex: 1;
    min-width: 0;
    display: flex;
    flex-direction: column;
    border-left: 1px solid #fff;
    border-bottom: 1px solid #a0a0a0;
}

.importer-tools {
    height: 33px;
    display: flex;
    align-items: center;
    padding: 0 3px;
    border-bottom: 1px solid #a0a0a0;
}

.importer-tools button {
    width: 26px;
    padding-left: 5px;
}

.importer-tools .sep {
    margin: 3px 4px;
}

.importer-tools .wizard {
    margin-left: 65px;
}

.page-tabs {
    height: 24px;
    display: flex;
    align-items: flex-end;
}

.page-tabs button {
    height: 22px;
    padding: 2px 5px 0;
    border: 1px solid #898c95;
    border-bottom: none;
    background: linear-gradient(#f2f2f2, #ebebeb 50%, #ddd 50%, #cfcfcf);
}

.page-tabs .active {
    height: 25px;
    padding: 0 9px 0 7px;
    margin-bottom: -1px;
    border-top: none;
    border-left: none;
    background: #fff;
    z-index: 1;
}

.page {
    flex: 1;
    display: flex;
    flex-direction: column;
    gap: 5px;
    margin-right: 3px;
    padding: 2px 1px 2px 3px;
    border: 1px solid #898c95;
    border-left: none;
    background-color: #fff;
}

.band {
    height: 17px;
    margin: 0;
    padding: 1px 0 0 4px;
    background-color: #696969;
    color: #e8e8e8;
    font-size: 12px;
    line-height: 16px;
}

.connection {
    position: relative;
    height: 150px;
    padding: 6px 4px 0 5px;
    border-right: 1px solid #a0a0a0;
    border-bottom: 1px solid #a0a0a0;
}

.login {
    display: grid;
    grid-template-columns: 132px 169px;
    grid-template-rows: 25px 22px 22px 23px;
    gap: 6px 4px;
    align-items: center;
    padding-top: 7px;
}

.login label {
    text-align: right;
    font-size: 13px;
}

.login > input {
    height: 22px;
    border: 1px solid #d4d8e0;
}

.combo {
    position: relative;
    height: 26px;
    display: flex;
    border: 1px solid #3c7fb1;
}

.combo input {
    flex: 1;
    min-width: 0;
    margin: 3px 2px;
    border: none;
    border-left: 1px solid #000;
    outline: none;
}

.combo button {
    width: 16px;
    padding-left: 4px;
    border: 1px solid #3c7fb1;
    border-width: 0 0 0 1px;
    background: linear-gradient(#e4f2fa, #c4e5f6 50%, #98d1ef 50%, #68b3db);
}

.options {
    position: absolute;
    top: 25px;
    left: -1px;
    right: -1px;
    padding: 1px 2px 0;
    height: 53px;
    border: 1px solid #c0c4cc;
    border-top-color: #828790;
    background-color: #fff;
    line-height: 17px;
}

.login-buttons {
    grid-column: 2;
    display: grid;
    grid-template-columns: 1fr 1fr;
    gap: 8px;
}

.btn {
    height: 23px;
    border: 1px solid #707070;
    border-radius: 3px;
    box-shadow: inset 0 0 0 1px #fafafa;
    background: linear-gradient(#f2f2f2, #ebebeb 50%, #ddd 50%, #cfcfcf);
}

.btn:disabled {
    border-color: #adb2b5;
    background: #f4f4f4;
    color: #838383;
}

/* hand-drawn pointers lie over the form */
.pointers {
    position: absolute;
    left: 0;
    top: 6px;
    width: 480px;
    height: 140px;
}

.note {
    position: absolute;
    left: 337px;
    top: 127px;
    margin: 0;
    font-family: "Liberation Mono", "Noto Sans CJK SC", monospace;
    font-size: 16px;
    font-weight: 300;
    line-height: 20px;
    color: #ff3838;
}

.query {
    flex: 1;
    display: flex;
    flex-direction: column;
    padding: 0 4px 4px 5px;
    border-right: 1px solid #a0a0a0;
    border-bottom: 1px solid #a0a0a0;
}

.panes {
    flex: 1;
    display: flex;
    gap: 6px;
}

.pane {
    display: flex;
    flex-direction: column;
    padding: 7px 2px 2px 3px;
    border-right: 1px solid #a0a0a0;
    border-bottom: 1px solid #a0a0a0;
}

.pane label {
    display: flex;
    align-items: center;
    gap: 4px;
    padding: 0 3px 2px;
    color: #777;
}

.pane input {
    appearance: none;
    width: 12px;
    height: 12px;
    border: 1px solid #aaa;
    border-radius: 50%;
    background: radial-gradient(#ddd, #f4f4f4);
}

.pane input:checked {
    background: radial-gradient(#888 2px, #aaa 3px, #fff 4px);
}

.table-pane {
    width: 280px;
}

.listbox {
    flex: 1;
    border: 1px solid #828790;
}

.query-pane {
    flex: 1;
}

.query-pane textarea {
    flex: 1;
    border: 1px solid #adadad;
    border-radius: 2px;
    background-color: #fff;
    resize: none;
}

.query-pane .btn {
    width: 98px;
    margin: 6px 3px 2px;
}

.preview {
    margin: 8px 1px 0 0;
    padding: 4px 4px 3px;
    border-top: 1px solid #fff;
    border-right: 1px solid #a0a0a0;
}

.result {
    height: 60px;
    margin-top: 4px;
    border: 1px solid #abadb3;
    background-color: #fff;
}

.actions {
    display: flex;
    align-items: center;
    gap: 8px;
    margin-right: 1px;
    padding: 9px 9px 9px 8px;
    border-top: 1px solid #a0a0a0;
    border-right: 1px solid #a0a0a0;
    box-shadow: inset 0 1px #fff;
}

.actions .btn {
    width: 98px;
}

.actions .wide {
    width: 125px;
}

.actions .small {
    width: 65px;
}

.actions .medium {
    width: 73px;
    margin-left: 3px;
}

.status {
    flex: 1;
    height: 21px;
    display: flex;
    margin-left: 1px;
    border: 1px solid;
    border-color: #a0a0a0 #fff #fff #a0a0a0;
}

.session {
    width: 198px;
    display: flex;
    align-items: center;
    gap: 4px;
    padding-left: 7px;
    border-right: 1px solid #a0a0a0;
    border-bottom: 1px solid #a0a0a0;
    text-align: left;
}

.session span {
    flex: 1;
}
```
